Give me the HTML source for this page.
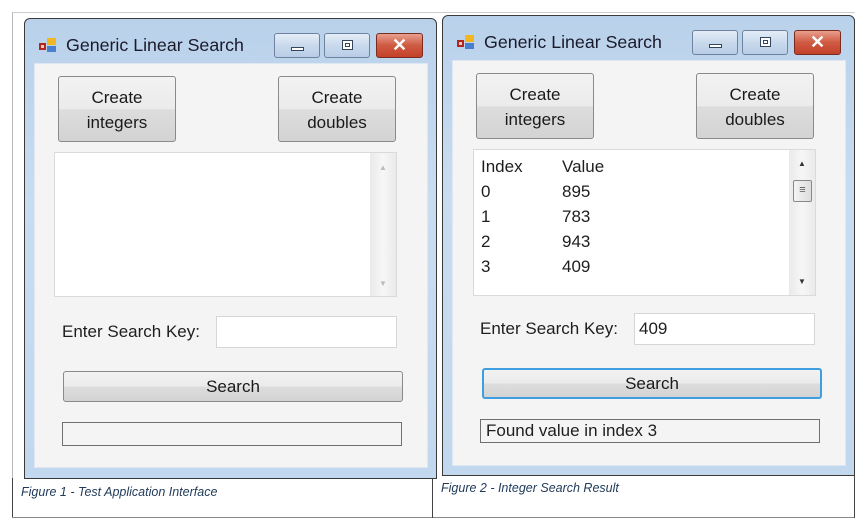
<!DOCTYPE html>
<html><head><style>
*{box-sizing:border-box;margin:0;padding:0}
body{width:865px;height:530px;background:#fff;position:relative;overflow:hidden;font-family:"Liberation Sans",sans-serif;color:#1e1e1e}
.a{position:absolute}
.win{position:absolute;border:1px solid #3a3a3a;background:linear-gradient(#b9d1ea,#c9ddf1 40%,#c2d8ee);border-radius:6px 6px 0 0}
.client{position:absolute;background:#f4f4f4;border:1px solid #dfe8f2}
.title{position:absolute;font-size:17.8px;color:#1a1a2a}
.cb{position:absolute;height:25px;border:1px solid #6f83a0;border-radius:3px;background:linear-gradient(#e4edf7,#c9d9ec 50%,#b8cde6)}
.cl{background:linear-gradient(#e8a08e,#cf5a42 50%,#c3412a);border-color:#7a2b20}
.btn{position:absolute;border:1px solid #8a8a8a;border-radius:3px;background:linear-gradient(#f2f2f2,#ebebeb 50%,#dddddd 51%,#d3d3d3);font-size:17px;text-align:center;line-height:25px;color:#1a1a1a}
.list{position:absolute;background:#fff;border:1px solid #dadada}
.sb{position:absolute;right:0;top:0;bottom:0;width:26px;background:linear-gradient(90deg,#eaeaea,#f6f6f6,#eaeaea)}
.tb{position:absolute;background:#fff;border:1px solid #d6d6d6;font-size:17px;padding-left:4px;line-height:30px}
.out{position:absolute;border:1px solid #707070;font-size:17px;padding-left:5px;line-height:22px}
.lbl{position:absolute;font-size:17px}
.cap{position:absolute;font-size:12.5px;font-style:italic;color:#1f3a5a}
.icon{position:absolute;width:20px;height:16px}
</style></head><body>
<div class="a" style="left:12px;top:478px;width:1px;height:40px;background:#444"></div>
<div class="a" style="left:12px;top:517px;width:843px;height:1px;background:#888"></div>
<div class="a" style="left:432px;top:478px;width:1px;height:40px;background:#444"></div>
<div class="a" style="left:854px;top:476px;width:1px;height:42px;background:#444"></div>
<div class="a" style="left:12px;top:12px;width:843px;height:1px;background:#ccc"></div>
<div class="a" style="left:12px;top:12px;width:1px;height:466px;background:#bbb"></div>

<div class="win" style="left:24px;top:18px;width:413px;height:461px"></div>
<div class="client" style="left:34px;top:63px;width:394px;height:405px"></div>
<svg class="icon" style="left:38px;top:37px" viewBox="0 0 20 16"><rect x="1" y="6" width="7" height="7" fill="#b3261e"/><rect x="3" y="8" width="3" height="3" fill="#f5c6c0"/><rect x="9" y="1" width="9" height="7" fill="#f2b620"/><rect x="9" y="9" width="9" height="6" fill="#4a7fd0"/></svg>
<div class="title" style="left:66px;top:35px">Generic Linear Search</div>
<div class="cb" style="left:274px;top:33px;width:46px"><div class="a" style="left:16px;top:13px;width:13px;height:4px;border:1px solid #34455e;background:#fff"></div></div>
<div class="cb" style="left:324px;top:33px;width:46px"><div class="a" style="left:17px;top:6px;width:11px;height:10px;border:1px solid #34455e;background:#fff"><div class="a" style="left:2px;top:2px;width:5px;height:4px;border:1px solid #34455e"></div></div></div>
<div class="cb cl" style="left:376px;top:33px;width:47px;color:#fff;font-weight:bold;text-align:center;font-size:18px;line-height:22px">✕</div>
<div class="btn" style="left:58px;top:76px;width:118px;height:66px;padding-top:8px">Create<br>integers</div>
<div class="btn" style="left:278px;top:76px;width:118px;height:66px;padding-top:8px">Create<br>doubles</div>
<div class="list" style="left:54px;top:152px;width:343px;height:145px"><div class="sb"><div class="a" style="left:9px;top:10px;font-size:8px;color:#bbb">▲</div><div class="a" style="left:9px;bottom:8px;font-size:8px;color:#bbb">▼</div></div></div>
<div class="lbl" style="left:62px;top:322px">Enter Search Key:</div>
<div class="tb" style="left:216px;top:316px;width:181px;height:32px"></div>
<div class="btn" style="left:63px;top:371px;width:340px;height:31px;line-height:29px">Search</div>
<div class="out" style="left:62px;top:422px;width:340px;height:24px"></div>
<div class="cap" style="left:21px;top:485px">Figure 1 - Test Application Interface</div>

<div class="win" style="left:442px;top:15px;width:413px;height:461px"></div>
<div class="client" style="left:452px;top:60px;width:394px;height:406px"></div>
<svg class="icon" style="left:456px;top:34px" viewBox="0 0 20 16"><rect x="1" y="6" width="7" height="7" fill="#b3261e"/><rect x="3" y="8" width="3" height="3" fill="#f5c6c0"/><rect x="9" y="1" width="9" height="7" fill="#f2b620"/><rect x="9" y="9" width="9" height="6" fill="#4a7fd0"/></svg>
<div class="title" style="left:484px;top:32px">Generic Linear Search</div>
<div class="cb" style="left:692px;top:30px;width:46px"><div class="a" style="left:16px;top:13px;width:13px;height:4px;border:1px solid #34455e;background:#fff"></div></div>
<div class="cb" style="left:742px;top:30px;width:46px"><div class="a" style="left:17px;top:6px;width:11px;height:10px;border:1px solid #34455e;background:#fff"><div class="a" style="left:2px;top:2px;width:5px;height:4px;border:1px solid #34455e"></div></div></div>
<div class="cb cl" style="left:794px;top:30px;width:47px;color:#fff;font-weight:bold;text-align:center;font-size:18px;line-height:22px">✕</div>
<div class="btn" style="left:476px;top:73px;width:118px;height:66px;padding-top:8px">Create<br>integers</div>
<div class="btn" style="left:696px;top:73px;width:118px;height:66px;padding-top:8px">Create<br>doubles</div>
<div class="list" style="left:473px;top:149px;width:343px;height:147px">
<div class="a" style="left:7px;top:4px;font-size:17px;line-height:25px">Index<br>0<br>1<br>2<br>3</div>
<div class="a" style="left:88px;top:4px;font-size:17px;line-height:25px">Value<br>895<br>783<br>943<br>409</div>
<div class="sb"><div class="a" style="left:9px;top:9px;font-size:8px;color:#333">▲</div><div class="a" style="left:4px;top:30px;width:19px;height:22px;border:1px solid #888;border-radius:2px;background:linear-gradient(90deg,#f4f4f4,#ddd);font-size:11px;text-align:center;line-height:18px;color:#555">≡</div><div class="a" style="left:9px;bottom:9px;font-size:8px;color:#333">▼</div></div></div>
<div class="lbl" style="left:480px;top:319px">Enter Search Key:</div>
<div class="tb" style="left:634px;top:313px;width:181px;height:32px">409</div>
<div class="btn" style="left:482px;top:368px;width:340px;height:31px;line-height:27px;border:2px solid #3e9ee0">Search</div>
<div class="out" style="left:480px;top:419px;width:340px;height:24px">Found value in index 3</div>
<div class="cap" style="left:441px;top:481px">Figure 2 - Integer Search Result</div>
</body></html>
